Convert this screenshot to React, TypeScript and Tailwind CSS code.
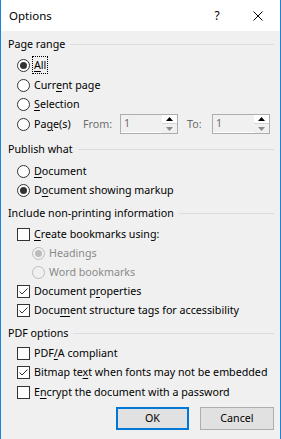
import type { ReactNode } from "react"

function U({ children }: { children: ReactNode }) {
  return <span className="underline underline-offset-[2px]">{children}</span>
}

function GroupLabel({ text, className = "" }: { text: string; className?: string }) {
  return (
    <div className={`flex h-[19px] items-center pl-[7px] pr-[6px] ${className}`}>
      <span>{text}</span>
      <span className="ml-[5px] h-px flex-1 bg-[#dcdcdc]" />
    </div>
  )
}

function RadioDot({ checked, disabled }: { checked?: boolean; disabled?: boolean }) {
  return (
    <span
      className={`flex h-[13px] w-[13px] shrink-0 items-center justify-center rounded-full border ${
        disabled ? "border-[#bcbcbc]" : "border-[#333333] bg-white"
      }`}
    >
      {checked && (
        <span className={`h-[7px] w-[7px] rounded-full ${disabled ? "bg-[#bcbcbc]" : "bg-[#333333]"}`} />
      )}
    </span>
  )
}

function Radio({
  label,
  checked,
  disabled,
  indent = false,
  className = "",
}: {
  label: ReactNode
  checked?: boolean
  disabled?: boolean
  indent?: boolean
  className?: string
}) {
  return (
    <div className={`flex h-[19px] items-center gap-[4px] ${indent ? "pl-[31px]" : "pl-[16px]"} ${className}`}>
      <RadioDot checked={checked} disabled={disabled} />
      <span className={disabled ? "text-[#8a8a8a]" : ""}>{label}</span>
    </div>
  )
}

function Checkbox({ label, checked, className = "" }: { label: ReactNode; checked?: boolean; className?: string }) {
  return (
    <div className={`flex h-[19px] items-center gap-[4px] pl-[16px] ${className}`}>
      <span className="flex h-[13px] w-[13px] shrink-0 items-center justify-center border border-[#333333] bg-white">
        {checked && (
          <svg width="11" height="11" viewBox="0 0 11 11">
            <path d="M1.5 5.5 L4 8 L9.5 2.5" fill="none" stroke="#333333" strokeWidth="1" />
          </svg>
        )}
      </span>
      <span>{label}</span>
    </div>
  )
}

function Spinner() {
  return (
    <div className="flex h-[20px] w-[58px] border border-[#adadad] bg-[#f0f0f0]">
      <div className="flex flex-1 items-center border-b border-white pl-[3px] text-[#6d6d6d]">1</div>
      <div className="flex w-[15px] flex-col bg-[#f0f0f0]">
        <div className="flex h-[9px] items-center justify-center border-b border-[#d4d4d4] bg-white">
          <svg width="7" height="4" viewBox="0 0 7 4">
            <path d="M0 4 L3.5 0 L7 4 Z" fill="#000000" />
          </svg>
        </div>
        <div className="flex flex-1 items-center justify-center">
          <svg width="7" height="4" viewBox="0 0 7 4">
            <path d="M0 0 L3.5 4 L7 0 Z" fill="#8a8a8a" />
          </svg>
        </div>
      </div>
    </div>
  )
}

export default function App() {
  return (
    <div className="flex h-[439px] w-[281px] flex-col border-x border-[#1883d7] bg-[#f0f0f0] font-['Noto_Sans',sans-serif] text-[10.7px] leading-none text-black">
      {/* Title bar */}
      <div className="flex h-[31px] items-center bg-white pl-[8px]">
        <span className="flex-1 text-[11.5px]">Options</span>
        <span className="w-[20px] text-center text-[12px]">?</span>
        <span className="ml-[26px] mr-[17px] flex h-[10px] w-[10px]">
          <svg width="10" height="10" viewBox="0 0 10 10">
            <path d="M0.5 0.5 L9.5 9.5 M9.5 0.5 L0.5 9.5" stroke="#000000" strokeWidth="1" />
          </svg>
        </span>
      </div>

      <div className="flex flex-1 flex-col pt-[4px]">
        <GroupLabel text="Page range" />
        <Radio
          className="mt-[2px]"
          checked
          label={
            <span className="outline-1 outline-offset-[1px] outline-dotted outline-black">
              <U>A</U>ll
            </span>
          }
        />
        <Radio className="mt-[1px]" label={<>Curr<U>e</U>nt page</>} />
        <Radio label={<><U>S</U>election</>} />
        <div className="flex h-[20px] items-center pl-[16px]">
          <RadioDot />
          <span className="ml-[4px] w-[49px]">
            Pa<U>g</U>e(s)
          </span>
          <span className="w-[37px] text-[#6d6d6d]">From:</span>
          <Spinner />
          <span className="ml-[9px] w-[25px] text-[#6d6d6d]">To:</span>
          <Spinner />
        </div>

        <GroupLabel className="mt-[6px]" text="Publish what" />
        <Radio className="mt-[3px]" label={<><U>D</U>ocument</>} />
        <Radio checked label={<>D<U>o</U>cument showing markup</>} />

        <GroupLabel className="mt-[4px]" text="Include non-printing information" />
        <Checkbox className="mt-[2px]" label={<><U>C</U>reate bookmarks using:</>} />
        <Radio indent checked disabled label="Headings" />
        <Radio indent disabled label="Word bookmarks" />
        <Checkbox checked label={<>Document p<U>r</U>operties</>} />
        <Checkbox checked label={<>Docu<U>m</U>ent structure tags for accessibility</>} />

        <GroupLabel className="mt-[4px]" text="PDF options" />
        <Checkbox className="mt-[1px]" label={<>PDF<U>/</U>A compliant</>} />
        <Checkbox checked label={<>Bitmap te<U>x</U>t when fonts may not be embedded</>} />
        <Checkbox className="mt-[1px]" label={<>E<U>n</U>crypt the document with a password</>} />

        <div className="mt-[5px] flex justify-end gap-[11px] pr-[6px]">
          <button className="flex h-[23px] w-[73px] items-center justify-center border-2 border-[#0078d7] bg-[#e1e1e1]">
            OK
          </button>
          <button className="flex h-[23px] w-[74px] items-center justify-center border border-[#adadad] bg-[#e1e1e1]">
            Cancel
          </button>
        </div>
      </div>
    </div>
  )
}
